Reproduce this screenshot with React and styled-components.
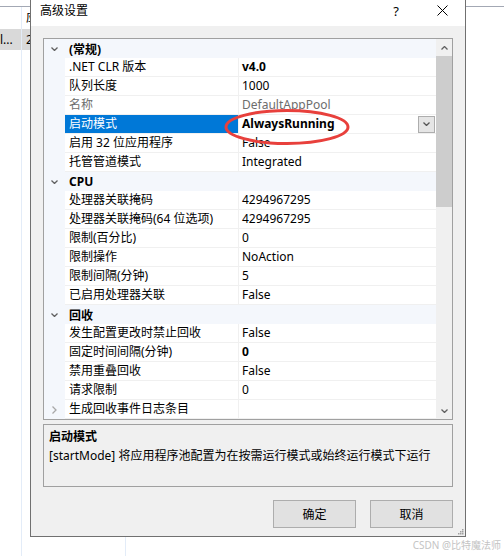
import styled, { createGlobalStyle } from 'styled-components'

const GlobalStyle = createGlobalStyle`
  html, body {
    margin: 0;
    padding: 0;
    background: #fff;
  }
  body {
    font-family: "Noto Sans", "Noto Sans CJK SC", sans-serif;
    font-size: 12px;
    color: #000;
  }
`

const Desktop = styled.div`
  position: relative;
  width: 504px;
  height: 556px;
  overflow: hidden;
  background: #fff;
`

/* list view window lying behind the dialog */
const BackWindow = styled.div`
  display: flex;
  flex-direction: column;
  height: 100%;
`

const BackTop = styled.div`
  height: 6px;
  border-bottom: 1px solid #a3a8b4;
`

const BackList = styled.div`
  display: flex;
  flex: 1;
`

const BackColumn = styled.div`
  display: flex;
  flex-direction: column;
  width: ${p => p.$width}px;
  border-right: 1px solid #e3ecf8;
`

const BackHead = styled.div`
  height: 22px;
  line-height: 22px;
  padding-left: 4px;
  white-space: nowrap;
  overflow: hidden;
`

const BackCell = styled.div`
  height: 21px;
  line-height: 21px;
  padding-left: ${p => p.$pad}px;
  background: #d9d9d9;
  white-space: nowrap;
  overflow: hidden;
`

/* dialog */
const Dialog = styled.div`
  position: absolute;
  left: 30px;
  top: -1px;
  width: 434px;
  height: 536px;
  border: 1px solid #707070;
  display: flex;
  flex-direction: column;
  background: #f0f0f0;
`

const TitleBar = styled.div`
  display: flex;
  align-items: center;
  height: 26px;
  background: #fff;
`

const Title = styled.span`
  flex: 1;
  padding-left: 9px;
  padding-bottom: 7px;
`

const CaptionButton = styled.div`
  display: flex;
  align-items: center;
  justify-content: center;
  width: 46px;
  height: 100%;
  padding-bottom: 5px;
  box-sizing: border-box;
  font-size: 13px;
`

const Body = styled.div`
  flex: 1;
  display: flex;
  flex-direction: column;
  padding: 12px 12px 0 12px;
`

const PropertyGrid = styled.div`
  display: flex;
  height: 380px;
  border: 1px solid #a0a0a0;
  background: #fff;
`

const GridRows = styled.div`
  flex: 1;
  display: flex;
  flex-direction: column;
`

const CategoryRow = styled.div`
  display: flex;
  align-items: center;
  height: 19px;
  background: #f4f7fc;
  font-weight: bold;
`

const CategoryTitle = styled.span`
  padding-left: 4px;
`

const PropRow = styled.div`
  display: flex;
  height: 19px;
`

const Gutter = styled.div`
  display: flex;
  align-items: center;
  justify-content: center;
  width: 21px;
  height: 19px;
  padding-right: 1px;
  box-sizing: border-box;
  background: #f4f7fc;
  flex-shrink: 0;
`

const NameCell = styled.div`
  width: 174px;
  padding-left: 4px;
  box-sizing: border-box;
  line-height: 18px;
  border-right: 1px solid #f0f0f0;
  border-bottom: 1px solid #f0f0f0;
  white-space: nowrap;
  background: ${p => (p.$selected ? '#0078d7' : '#fff')};
  color: ${p => (p.$selected ? '#fff' : p.$readOnly ? '#6d6d6d' : '#000')};
`

const ValueCell = styled.div`
  flex: 1;
  display: flex;
  align-items: center;
  justify-content: space-between;
  padding-left: 3px;
  line-height: 18px;
  border-bottom: 1px solid #f0f0f0;
  white-space: nowrap;
  font-weight: ${p => (p.$bold ? 'bold' : 'normal')};
  color: ${p => (p.$readOnly ? '#6d6d6d' : '#000')};
`

const DropButton = styled.div`
  display: flex;
  align-items: center;
  justify-content: center;
  width: 15px;
  height: 15px;
  margin-right: 1px;
  border: 1px solid #adadad;
  background: #e5e5e5;
`

const ScrollBar = styled.div`
  display: flex;
  flex-direction: column;
  width: 16px;
  background: #f0f0f0;
`

const ScrollArrow = styled.div`
  display: flex;
  align-items: center;
  justify-content: center;
  height: 17px;
`

const ScrollThumb = styled.div`
  height: 151px;
  background: #cdcdcd;
`

const ScrollTrack = styled.div`
  flex: 1;
`

const Description = styled.div`
  margin-top: 4px;
  height: 57px;
  border: 1px solid #a0a0a0;
  padding: 2px 5px;
  line-height: 19px;
`

const DescTitle = styled.div`
  font-weight: bold;
`

const Footer = styled.div`
  display: flex;
  justify-content: flex-end;
  gap: 14px;
  margin-top: 13px;
`

const Button = styled.div`
  display: flex;
  align-items: center;
  justify-content: center;
  width: 81px;
  height: 26px;
  border: 1px solid #adadad;
  background: #e1e1e1;
`

const Grip = styled.svg`
  position: absolute;
  right: 1px;
  bottom: 1px;
`

const Annotation = styled.svg`
  position: absolute;
  left: 222px;
  top: 106px;
  pointer-events: none;
`

const Watermark = styled.div`
  position: absolute;
  right: 3px;
  bottom: 4px;
  font-size: 10px;
  color: #c4c4c4;
  white-space: nowrap;
`

const Chevron = ({ dir = 'down', color = '#606060' }) => {
  const pts = {
    down: '0.5,0.5 3.5,3.5 6.5,0.5',
    up: '0.5,3.5 3.5,0.5 6.5,3.5',
  }
  if (dir === 'right') {
    return (
      <svg width="5" height="8" viewBox="0 0 5 8">
        <polyline points="0.5,0.5 4,4 0.5,7.5" fill="none" stroke={color} strokeWidth="1.3" />
      </svg>
    )
  }
  return (
    <svg width="7" height="4" viewBox="0 0 7 4">
      <polyline points={pts[dir]} fill="none" stroke={color} strokeWidth="1.3" />
    </svg>
  )
}

const sections = [
  {
    title: '(常规)',
    items: [
      { name: '.NET CLR 版本', value: 'v4.0', bold: true },
      { name: '队列长度', value: '1000' },
      { name: '名称', value: 'DefaultAppPool', readOnly: true },
      { name: '启动模式', value: 'AlwaysRunning', bold: true, selected: true },
      { name: '启用 32 位应用程序', value: 'False' },
      { name: '托管管道模式', value: 'Integrated' },
    ],
  },
  {
    title: 'CPU',
    items: [
      { name: '处理器关联掩码', value: '4294967295' },
      { name: '处理器关联掩码(64 位选项)', value: '4294967295' },
      { name: '限制(百分比)', value: '0' },
      { name: '限制操作', value: 'NoAction' },
      { name: '限制间隔(分钟)', value: '5' },
      { name: '已启用处理器关联', value: 'False' },
    ],
  },
  {
    title: '回收',
    items: [
      { name: '发生配置更改时禁止回收', value: 'False' },
      { name: '固定时间间隔(分钟)', value: '0', bold: true },
      { name: '禁用重叠回收', value: 'False' },
      { name: '请求限制', value: '0' },
      { name: '生成回收事件日志条目', value: '', collapsed: true },
    ],
  },
]

const App = () => {
  return (
    <Desktop>
      <GlobalStyle />

      <BackWindow>
        <BackTop />
        <BackList>
          <BackColumn $width={21}>
            <BackHead />
            <BackCell $pad={0}>l...</BackCell>
          </BackColumn>
          <BackColumn $width={103}>
            <BackHead>应</BackHead>
            <BackCell $pad={4}>2</BackCell>
          </BackColumn>
        </BackList>
      </BackWindow>

      <Dialog>
        <TitleBar>
          <Title>高级设置</Title>
          <CaptionButton>?</CaptionButton>
          <CaptionButton>
            <svg width="11" height="11" viewBox="0 0 11 11">
              <path d="M0.5 0.5 L10.5 10.5 M10.5 0.5 L0.5 10.5" stroke="#000" strokeWidth="1" />
            </svg>
          </CaptionButton>
        </TitleBar>

        <Body>
          <PropertyGrid>
            <GridRows>
              {sections.map(section => (
                <div key={section.title}>
                  <CategoryRow>
                    <Gutter>
                      <Chevron />
                    </Gutter>
                    <CategoryTitle>{section.title}</CategoryTitle>
                  </CategoryRow>
                  {section.items.map(item => (
                    <PropRow key={item.name}>
                      <Gutter>{item.collapsed && <Chevron dir="right" color="#a8a8a8" />}</Gutter>
                      <NameCell $selected={item.selected} $readOnly={item.readOnly}>
                        {item.name}
                      </NameCell>
                      <ValueCell $bold={item.bold} $readOnly={item.readOnly}>
                        {item.value}
                        {item.selected && (
                          <DropButton>
                            <Chevron color="#555" />
                          </DropButton>
                        )}
                      </ValueCell>
                    </PropRow>
                  ))}
                </div>
              ))}
            </GridRows>
            <ScrollBar>
              <ScrollArrow>
                <Chevron dir="up" />
              </ScrollArrow>
              <ScrollThumb />
              <ScrollTrack />
              <ScrollArrow>
                <Chevron />
              </ScrollArrow>
            </ScrollBar>
          </PropertyGrid>

          <Description>
            <DescTitle>启动模式</DescTitle>
            <div>[startMode] 将应用程序池配置为在按需运行模式或始终运行模式下运行</div>
          </Description>

          <Footer>
            <Button>确定</Button>
            <Button>取消</Button>
          </Footer>
        </Body>

        <Grip width="7" height="7" viewBox="0 0 7 7">
          {[[5, 1], [3, 3], [5, 3], [1, 5], [3, 5], [5, 5]].map(([x, y]) => (
            <rect key={`${x}-${y}`} x={x} y={y} width="1.5" height="1.5" fill="#a0a0a0" />
          ))}
        </Grip>
      </Dialog>

      <Annotation width="132" height="42" viewBox="0 0 132 42">
        <ellipse cx="65" cy="21" rx="61" ry="16.5" fill="none" stroke="#e8403c" strokeWidth="3" />
      </Annotation>

      <Watermark>CSDN @比特魔法师</Watermark>
    </Desktop>
  )
}

export default App
